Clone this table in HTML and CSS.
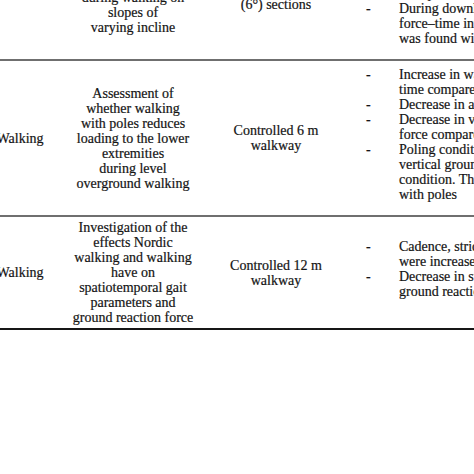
FILE: index.html
```html
<!DOCTYPE html>
<html>
<head>
<meta charset="utf-8">
<link rel="stylesheet" href="styles.css">
</head>
<body>
<div class="crop">
<table class="studies">
  <colgroup>
    <col class="c-type"><col class="c-aim"><col class="c-setting"><col class="c-find">
  </colgroup>
  <tbody>
    <tr class="row-first">
      <td class="type"></td>
      <td class="aim">Analysis of plantar<br>pressure distribution<br>during walking on<br>slopes of<br>varying incline</td>
      <td class="setting">Treadmill with level,<br>(6°) sections</td>
      <td class="find">
        <ul class="bullets">
          <li><span class="dash">-</span><span>Higher plantar pressure under the<br>heel during uphill walking</span></li>
          <li><span class="dash">-</span><span>Reduced loading of the midfoot<br>with poles on level ground</span></li>
          <li><span class="dash">-</span><span>During downhill walking, a lower<br>force–time integral under the forefoot<br>was found with poles</span></li>
        </ul>
      </td>
    </tr>
    <tr>
      <td class="type">Nordic Walking</td>
      <td class="aim">Assessment of<br>whether walking<br>with poles reduces<br>loading to the lower<br>extremities<br>during level<br>overground walking</td>
      <td class="setting">Controlled 6 m<br>walkway</td>
      <td class="find">
        <ul class="bullets">
          <li><span class="dash">-</span><span>Increase in walking speed and stance<br>time compared to walking without poles</span></li>
          <li><span class="dash">-</span><span>Decrease in average vertical loading rate</span></li>
          <li><span class="dash">-</span><span>Decrease in vertical ground reaction<br>force compared with walking</span></li>
          <li><span class="dash">-</span><span>Poling condition had lower peak<br>vertical ground reaction force than the<br>condition. The loading rate was lower<br>with poles</span></li>
        </ul>
      </td>
    </tr>
    <tr class="row-last">
      <td class="type">Nordic Walking</td>
      <td class="aim">Investigation of the<br>effects Nordic<br>walking and walking<br>have on<br>spatiotemporal gait<br>parameters and<br>ground reaction force</td>
      <td class="setting">Controlled 12 m<br>walkway</td>
      <td class="find">
        <ul class="bullets">
          <li><span class="dash">-</span><span>Cadence, stride length and speed<br>were increased with Nordic walking</span></li>
          <li><span class="dash">-</span><span>Decrease in stance time and vertical<br>ground reaction force</span></li>
        </ul>
      </td>
    </tr>
  </tbody>
</table>
</div>
</body>
</html>
```
FILE: styles.css
```css
html, body {
  margin: 0;
  padding: 0;
  background: #ffffff;
}

.crop {
  width: 474px;
  height: 474px;
  overflow: hidden;
}

.studies {
  border-collapse: collapse;
  table-layout: fixed;
  width: 600px;
  margin-left: -72px;
  margin-top: -65px;
  font-family: "Liberation Serif", "Times New Roman", serif;
  font-size: 14px;
  line-height: 15px;
  color: #141414;
  -webkit-text-stroke: 0.2px #141414;
  white-space: nowrap;
}

.c-type { width: 142px; }
.c-aim { width: 126px; }
.c-setting { width: 160px; }
.c-find { width: 172px; }

.studies td {
  vertical-align: middle;
  text-align: center;
  padding: 3px 0;
  border-bottom: 2px solid #6f6f6f;
}

.studies .row-last td {
  border-bottom-color: #161616;
}

.studies td.find {
  text-align: left;
  padding: 5.5px 0 13.5px 10px;
}

.bullets {
  list-style: none;
  margin: 0;
  padding: 0;
}

.bullets li {
  display: grid;
  grid-template-columns: 33px auto;
}

.dash {
  display: block;
}
```
